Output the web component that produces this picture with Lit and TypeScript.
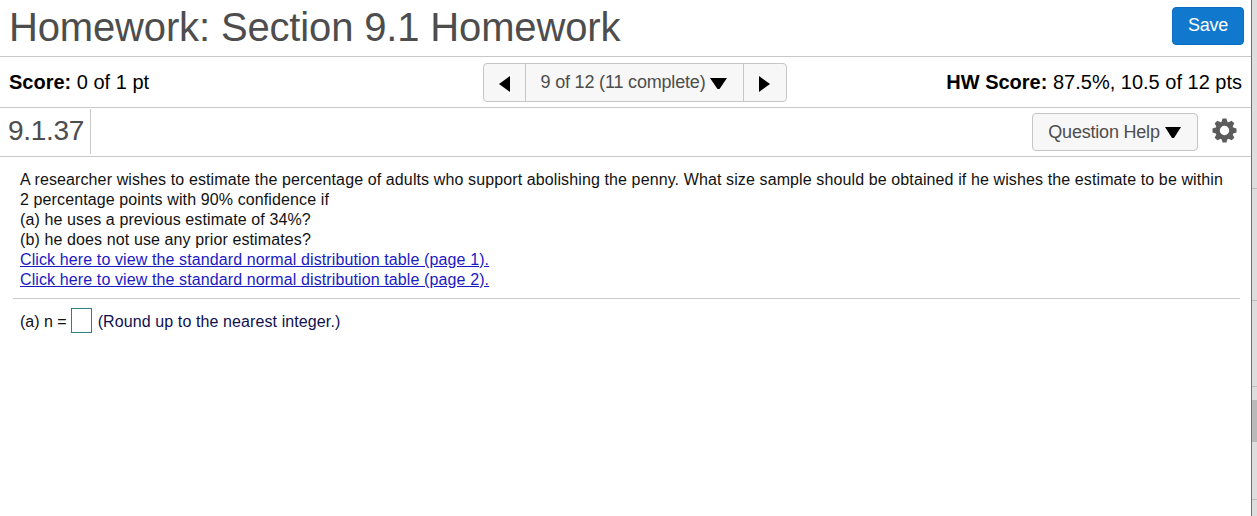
import { LitElement, html, css } from 'lit';
import { customElement, property } from 'lit/decorators.js';

@customElement('homework-header')
export class HomeworkHeader extends LitElement {
    static styles = css`
        :host {
            display: flex;
            justify-content: space-between;
            align-items: flex-start;
            height: 56px;
            border-bottom: 1px solid #c8c8c8;
            padding: 0 7px 0 9px;
        }

        h1 {
            margin: 4px 0 0;
            font-size: 40px;
            line-height: 46px;
            font-weight: normal;
            letter-spacing: -0.15px;
            white-space: nowrap;
            color: #4d4d4d;
        }

        button {
            width: 72px;
            height: 38px;
            margin-top: 7px;
            padding: 0 0 2px;
            border: 1px solid #0a6fc2;
            border-radius: 4px;
            background: #1079ce;
            color: #fff;
            font: 18px "Liberation Sans", Arial, sans-serif;
            letter-spacing: -0.2px;
        }
    `;

    @property() heading = '';

    render() {
        return html`
            <h1>${this.heading}</h1>
            <button type="button">Save</button>
        `;
    }
}

@customElement('score-bar')
export class ScoreBar extends LitElement {
    static styles = css`
        :host {
            display: grid;
            grid-template-columns: 1fr 304px 1fr;
            align-items: center;
            height: 50px;
            border-bottom: 1px solid #c8c8c8;
            padding: 0 9px;
            font-size: 20px;
            white-space: nowrap;
            color: #000;
        }

        .score {
            line-height: 24px;
        }

        .total {
            text-align: right;
        }

        .pager {
            display: flex;
            box-sizing: border-box;
            height: 39px;
            margin: 1px 0 0 9px;
            width: 304px;
            border: 1px solid #c6c6c6;
            border-radius: 4px;
            background: #f7f7f7;
            overflow: hidden;
        }

        .pager button {
            display: flex;
            align-items: center;
            justify-content: center;
            padding: 0;
            border: 0;
            background: none;
            color: #4d4d4d;
            font: 18px "Liberation Sans", Arial, sans-serif;
        }

        .prev {
            width: 41px;
        }

        .pager .current {
            flex: 1;
            gap: 5px;
            border-left: 1px solid #c6c6c6;
            border-right: 1px solid #c6c6c6;
            letter-spacing: -0.18px;
        }

        .next {
            width: 42px;
        }

        svg {
            display: block;
            margin-top: 2px;
        }
    `;

    render() {
        return html`
            <div class="score"><b>Score:</b> 0 of 1 pt</div>
            <div class="pager">
                <button class="prev" type="button" aria-label="Previous">
                    <svg width="11" height="16" viewBox="0 0 11 16"><path d="M11 0v16L0 8z"/></svg>
                </button>
                <button class="current" type="button">
                    <span>9 of 12 (11 complete)</span>
                    <svg width="17" height="11" viewBox="0 0 17 11"><path d="M0 0h17L9.500 11h-2z"/></svg>
                </button>
                <button class="next" type="button" aria-label="Next">
                    <svg width="11" height="16" viewBox="0 0 11 16"><path d="M0 0v16l11-8z"/></svg>
                </button>
            </div>
            <div class="score total"><b>HW Score:</b> 87.5%, 10.5 of 12 pts</div>
        `;
    }
}

@customElement('question-bar')
export class QuestionBar extends LitElement {
    static styles = css`
        :host {
            display: flex;
            align-items: flex-start;
            height: 48px;
            border-bottom: 1px solid #c8c8c8;
            padding: 0 14px 0 8px;
        }

        .number {
            box-sizing: border-box;
            width: 83px;
            height: 45px;
            margin-top: 1px;
            border-right: 1px solid #c8c8c8;
            font-size: 28px;
            line-height: 43px;
            letter-spacing: -0.3px;
            color: #4d4d4d;
        }

        .help {
            display: flex;
            align-items: center;
            justify-content: center;
            gap: 5px;
            box-sizing: border-box;
            width: 166px;
            height: 38px;
            margin: 5px 14px 0 auto;
            padding: 0 1px 0 0;
            border: 1px solid #c6c6c6;
            border-radius: 4px;
            background: #f7f7f7;
            color: #4d4d4d;
            font: 18px "Liberation Sans", Arial, sans-serif;
            letter-spacing: -0.2px;
        }

        .gear {
            margin-top: 10px;
        }
    `;

    render() {
        return html`
            <div class="number">9.1.37</div>
            <button class="help" type="button">
                <span>Question Help</span>
                <svg width="16" height="11" viewBox="0 0 16 11"><path d="M0 0h16L9 11H7z"/></svg>
            </button>
            <svg class="gear" width="25" height="25" viewBox="-12.500 -12.500 25 25" fill="#5c5c5c" stroke="#5c5c5c">
                <circle r="6.900" fill="none" stroke-width="4.400"/>
                <path id="teeth" stroke="none" d="M-3.200-8L-1.900-12h3.800L3.200-8zM-3.200 8L-1.900 12h3.800L3.200 8zM-8-3.200L-12-1.900v3.800L-8 3.200zM8-3.200L12-1.900v3.800L8 3.200z"/>
                <use href="#teeth" transform="rotate(45)"/>
            </svg>
        `;
    }
}

@customElement('question-body')
export class QuestionBody extends LitElement {
    static styles = css`
        :host {
            display: block;
            padding: 13px 11px 0 13px;
            font-size: 16px;
            line-height: 20px;
            color: #111;
        }

        .text {
            padding: 0 7px 8px;
            letter-spacing: 0.113px;
            white-space: nowrap;
        }

        a {
            color: #1a1ac4;
            text-decoration: underline;
        }

        .answer {
            display: flex;
            align-items: center;
            border-top: 1px solid #c8c8c8;
            padding: 9px 7px 0;
        }

        .answer span {
            margin-top: 2px;
        }

        input {
            box-sizing: border-box;
            width: 21px;
            height: 25px;
            margin: 0 6px 0 4px;
            padding: 0;
            border: 1px solid #2b7f86;
            background: #fff;
        }

        .hint {
            letter-spacing: 0.1px;
            color: #10104f;
        }
    `;

    render() {
        return html`
            <div class="text">
                <div>A researcher wishes to estimate the percentage of adults who support abolishing the penny. What size sample should be obtained if he wishes the estimate to be within</div>
                <div>2 percentage points with 90% confidence if</div>
                <div>(a) he uses a previous estimate of 34%?</div>
                <div>(b) he does not use any prior estimates?</div>
                <div><a>Click here to view the standard normal distribution table (page 1).</a></div>
                <div><a>Click here to view the standard normal distribution table (page 2).</a></div>
            </div>
            <div class="answer">
                <span>(a) n =</span>
                <input type="text" aria-label="n">
                <span class="hint">(Round up to the nearest integer.)</span>
            </div>
        `;
    }
}

@customElement('app-root')
export class AppRoot extends LitElement {
    static styles = css`
        :host {
            display: flex;
            height: 516px;
            overflow: hidden;
            background: #fff;
            font-family: "Liberation Sans", Arial, sans-serif;
        }

        main {
            flex: 1;
            min-width: 0;
            border-right: 1px solid #6e6e6e;
        }

        /* sliver of the page behind the player window */
        .behind {
            display: grid;
            grid-template-rows: 189px 112px 86px 13px 42px 58px 1fr;
            width: 5px;
            background: #dedede;
        }

        .behind div {
            border-bottom: 1px solid #bdbdbd;
        }

        .behind .plain {
            border: 0;
        }

        .behind .thumb {
            border: 0;
            background: #bababa;
        }
    `;

    render() {
        return html`
            <main>
                <homework-header heading="Homework: Section 9.1 Homework"></homework-header>
                <score-bar></score-bar>
                <question-bar></question-bar>
                <question-body></question-body>
            </main>
            <div class="behind">
                <div></div>
                <div></div>
                <div></div>
                <div class="plain"></div>
                <div class="thumb"></div>
                <div></div>
                <div class="plain"></div>
            </div>
        `;
    }
}
